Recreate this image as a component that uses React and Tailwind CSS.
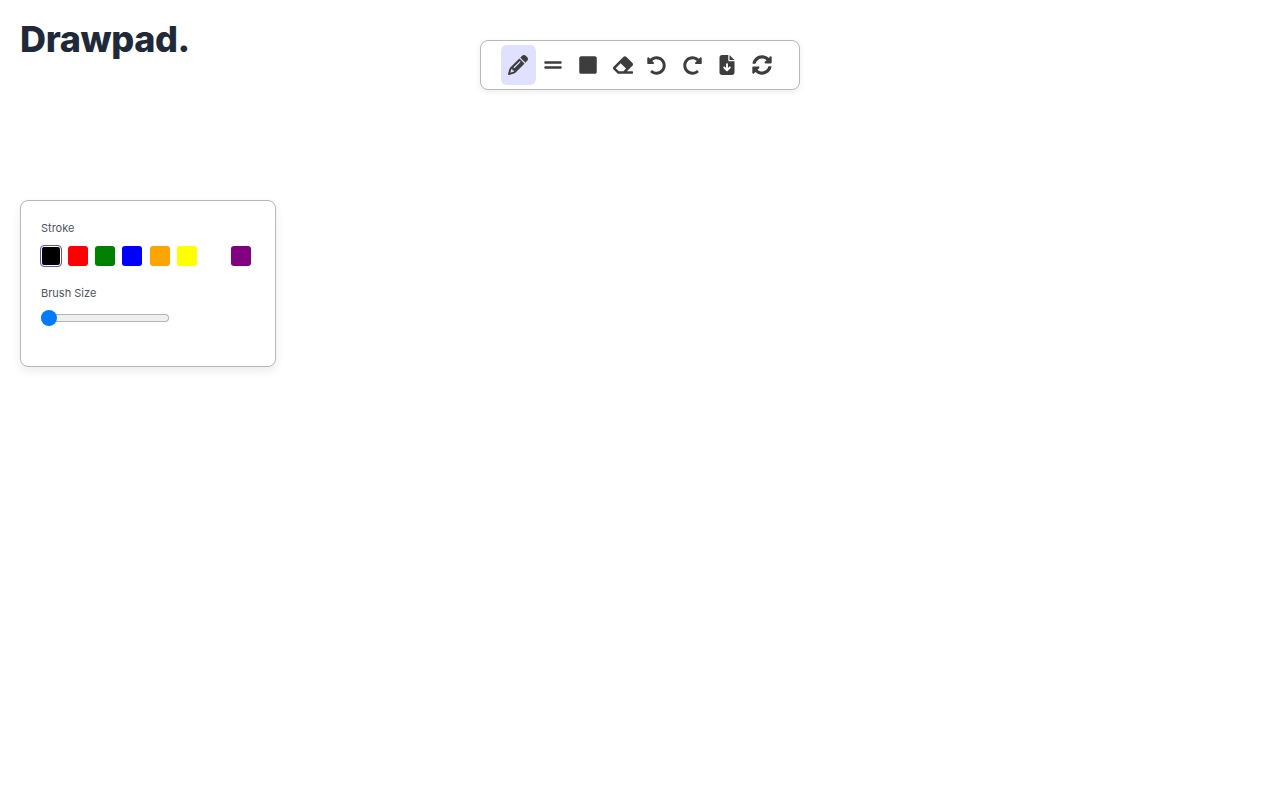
import { FaSquare, FaEraser, FaUndoAlt, FaRedoAlt, FaSyncAlt } from 'react-icons/fa';
import { FaPencil, FaGripLines, FaFileArrowDown } from 'react-icons/fa6';

const tools = [
    { icon: FaPencil, className: 'h-5 w-auto', active: true },
    { icon: FaGripLines, className: 'h-5 w-auto' },
    { icon: FaSquare, className: 'h-5 w-auto' },
    { icon: FaEraser, className: 'h-5 w-auto' },
    { icon: FaUndoAlt, className: 'h-[19px] w-auto -ml-[2px]' },
    { icon: FaRedoAlt, className: 'h-[19px] w-auto' },
    { icon: FaFileArrowDown, className: 'h-5 w-auto' },
    { icon: FaSyncAlt, className: 'h-5 w-auto' },
];

const colors = [
    { name: 'black', className: 'bg-[#000000] border border-white outline outline-[#5a55c0]' },
    { name: 'red', className: 'bg-[#ff0000]' },
    { name: 'green', className: 'bg-[#008000]' },
    { name: 'blue', className: 'bg-[#0000ff]' },
    { name: 'orange', className: 'bg-[#ffa500]' },
    { name: 'yellow', className: 'bg-[#ffff00]' },
    { name: 'white', className: 'bg-white' },
    { name: 'purple', className: 'bg-[#800080]' },
];

export default function App() {
    return (
        <div className="relative h-[800px] w-full overflow-hidden bg-white font-['Inter',sans-serif]">
            {/* Logo */}
            <h1 className="absolute left-5 top-[15px] text-[36px] leading-[48px] font-extrabold tracking-[-0.36px] text-[#1f2937]">
                Drawpad.
            </h1>

            {/* Toolbar */}
            <div className="absolute left-[480px] top-10 flex h-[50px] w-80 items-center rounded-lg border border-[#b8b8b8] bg-white pl-[19.8px] shadow-[0_2px_6px_rgba(0,0,0,0.08)]">
                {tools.map(({ icon: Icon, className, active }, i) => (
                    <button
                        key={i}
                        className={`flex h-10 w-[34.86px] items-center justify-center rounded-md text-[#3d3d3d] ${active ? 'bg-[#e0e0ff]' : ''}`}
                    >
                        <Icon className={className} />
                    </button>
                ))}
            </div>

            {/* Properties panel */}
            <div className="absolute left-5 top-[200px] h-[167px] w-64 rounded-lg border border-[#b8b8b8] bg-white px-5 pt-5 shadow-[0_4px_10px_rgba(0,0,0,0.08)]">
                <p className="text-[11px] leading-[14px] text-[#4b5563]">Stroke</p>
                <div className="mt-[11px] flex w-[210px] justify-between">
                    {colors.map((color) => (
                        <button key={color.name} aria-label={color.name} className={`h-5 w-5 rounded-[3px] ${color.className}`} />
                    ))}
                </div>
                <p className="mt-5 text-[11px] leading-[14px] text-[#4b5563]">Brush Size</p>
                <input
                    type="range"
                    min="1"
                    max="50"
                    defaultValue="1"
                    className="mt-[14px] block h-2 w-[128px] appearance-none rounded-full bg-[#efefef] shadow-[inset_0_0_0_1px_#b4b4b4] [&::-webkit-slider-thumb]:h-4 [&::-webkit-slider-thumb]:w-4 [&::-webkit-slider-thumb]:appearance-none [&::-webkit-slider-thumb]:rounded-full [&::-webkit-slider-thumb]:bg-[#007bff]"
                />
            </div>
        </div>
    );
}
